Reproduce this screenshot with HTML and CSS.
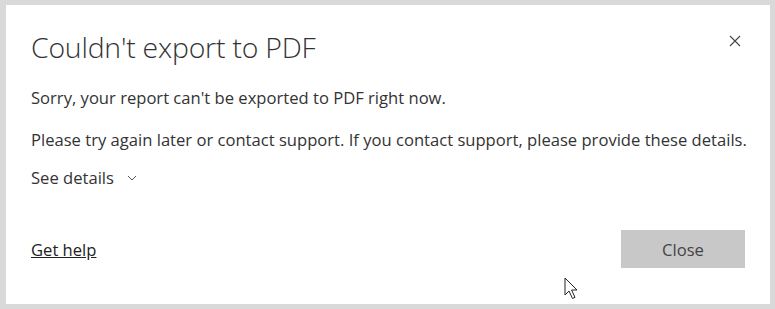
FILE: index.html
```html
<!DOCTYPE html>
<html>
<head>
<meta charset="utf-8">
<link rel="stylesheet" href="styles.css">
</head>
<body>
<div class="dialog">
  <div class="header">
    <h1 class="title">Couldn't export to PDF</h1>
    <button class="x" aria-label="Close">
      <svg width="12" height="12" viewBox="0 0 12 12"><path d="M1 1L11 11M11 1L1 11" stroke="#444" stroke-width="1.1" fill="none"/></svg>
    </button>
  </div>
  <p class="msg">Sorry, your report can't be exported to PDF right now.</p>
  <p class="msg second">Please try again later or contact support. If you contact support, please provide these details.</p>
  <div class="details">See details
    <svg class="chev" width="10" height="6" viewBox="0 0 10 6"><path d="M1 1L5 5L9 1" stroke="#555" stroke-width="1" fill="none"/></svg>
  </div>
  <div class="footer">
    <a class="help" href="#">Get help</a>
    <button class="closebtn">Close</button>
  </div>
  <svg class="cursor" width="16" height="24" viewBox="0 0 16 24"><path d="M1 1L1 18L5 14L8.5 21.5L11 20.3L7.6 13L13 13Z" fill="#fff" stroke="#222" stroke-width="1" stroke-linejoin="round"/></svg>
</div>
</body>
</html>
```
FILE: styles.css
```css
html, body { margin: 0; padding: 0; }
body {
  width: 775px;
  height: 309px;
  background: #d9d9d9;
  padding: 5px 5px 0 6px;
  box-sizing: border-box;
  font-family: "Open Sans", "Noto Sans", sans-serif;
  overflow: hidden;
}
.dialog {
  position: relative;
  background: #fff;
  width: 764px;
  height: 299px;
  box-sizing: border-box;
  padding: 23px 25px 0 25px;
  color: #333;
}
.header {
  display: flex;
  justify-content: space-between;
  align-items: flex-start;
}
.title {
  margin: 0;
  font-size: 28.4px;
  font-weight: 300;
  line-height: 38px;
  color: #333;
  letter-spacing: -0.2px;
}
.x {
  border: 0;
  background: transparent;
  padding: 0;
  margin: 7px 4px 0 0;
  width: 12px;
  height: 12px;
  display: block;
}
.x svg { display: block; }
.msg {
  margin: 20px 0 0 0;
  font-size: 16.6px;
  line-height: 24px;
  color: #333;
  white-space: nowrap;
}
.second { margin-top: 18px; }
.details {
  margin-top: 14px;
  font-size: 16.6px;
  line-height: 24px;
  color: #333;
  display: flex;
  align-items: center;
  gap: 13px;
}
.footer {
  margin-top: 40px;
  display: flex;
  justify-content: space-between;
  align-items: center;
}
.help {
  color: #222;
  font-size: 16.6px;
  text-decoration: underline;
}
.closebtn {
  width: 124px;
  height: 38px;
  border: 0;
  background: #c8c8c8;
  color: #444;
  font-family: "Open Sans", "Noto Sans", sans-serif;
  font-size: 16.6px;
  margin-right: 0;
}
.cursor {
  position: absolute;
  left: 558px;
  top: 272px;
}
```
